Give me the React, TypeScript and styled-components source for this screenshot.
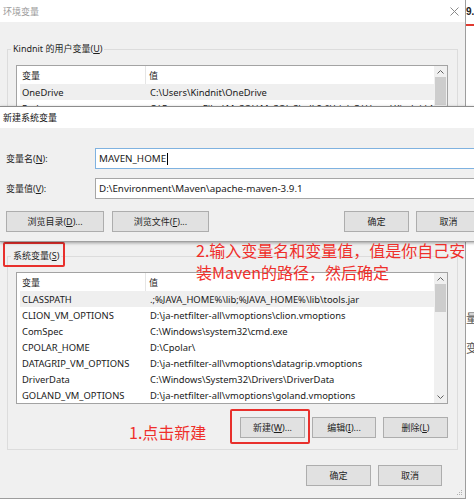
import React from "react";
import styled, { createGlobalStyle } from "styled-components";

const GlobalStyle = createGlobalStyle`
  html, body { margin: 0; padding: 0; background: #fff; }
  body {
    font-family: "Noto Sans", "Noto Sans CJK SC", sans-serif;
    font-size: 9px;
    color: #1e1e1e;
  }
  * { box-sizing: border-box; }
`;

const Desktop = styled.div`
  position: relative;
  width: 474px;
  height: 502px;
  overflow: hidden;
  background: #fff;
  display: flex;
  align-items: flex-start;
`;

const BackWindow = styled.div`
  position: relative;
  flex: 0 0 466px;
  height: 499px;
  display: flex;
  flex-direction: column;
  background: #f0f0f0;
  border-right: 1px solid #9d9d9d;
  border-bottom: 1px solid #9d9d9d;
`;

const TitleBar = styled.div<{ $active?: boolean; $h: number }>`
  height: ${(p) => p.$h}px;
  flex: 0 0 auto;
  background: #fff;
  display: flex;
  align-items: center;
  padding-left: 3px;
  color: ${(p) => (p.$active ? "#111" : "#9a9a9a")};
  font-family: "Noto Sans CJK SC", sans-serif;
  font-size: 9px;
`;

const CloseIcon = styled.svg`
  margin-left: auto;
  margin-right: 6px;
`;

const WindowBody = styled.div`
  padding: 0 7px;
  display: flex;
  flex-direction: column;
`;

const Group = styled.fieldset<{ $mt: number }>`
  margin: ${(p) => p.$mt}px 0 0 0;
  border: 1px solid #dcdcdc;
  padding: 9px 9px 11px 8px;
  min-width: 0;
`;

const Legend = styled.legend<{ $framed?: boolean }>`
  position: relative;
  padding: 0 2px;
  margin-left: -5px;
  line-height: 14px;
  font-size: 9px;
  color: #1e1e1e;
  ${(p) =>
    p.$framed
      ? `&::after {
    content: "";
    position: absolute;
    inset: -7px -4px -4px -8px;
    border: 2px solid #e8302c;
    border-radius: 2px;
  }`
      : ""}
`;

const List = styled.div<{ $h: number }>`
  height: ${(p) => p.$h}px;
  border: 1px solid #a3a3a3;
  background: #fff;
  display: flex;
  overflow: hidden;
`;

const ListTable = styled.div`
  flex: 1;
  min-width: 0;
  display: flex;
  flex-direction: column;
`;

const HeaderRow = styled.div`
  display: grid;
  grid-template-columns: 128px 1fr;
  height: 18px;
  flex: 0 0 auto;
`;

const HeaderCell = styled.div<{ $divider?: boolean }>`
  display: flex;
  align-items: center;
  padding-left: ${(p) => (p.$divider ? 3 : 5)}px;
  border-left: ${(p) => (p.$divider ? "1px solid #e5e5e5" : "none")};
`;

const Row = styled.div<{ $selected?: boolean }>`
  display: grid;
  grid-template-columns: 128px 1fr;
  height: 16px;
  flex: 0 0 auto;
  margin-left: 3px;
  align-items: center;
  white-space: nowrap;
  font-size: 9.4px;
  color: #1a1a1a;
  background: ${(p) => (p.$selected ? "#efefef" : "transparent")};
`;

const Cell = styled.div`
  padding-left: 2px;
  overflow: hidden;
`;

const Scrollbar = styled.div`
  flex: 0 0 13px;
  background: #f0f0f0;
  display: flex;
  flex-direction: column;
  align-items: center;
`;

const ScrollArrow = styled.div<{ $h: number }>`
  height: ${(p) => p.$h}px;
  width: 100%;
  display: flex;
  align-items: center;
  justify-content: center;
`;

const Thumb = styled.div`
  width: 11px;
  height: 28px;
  background: #cdcdcd;
`;

const Spacer = styled.div`
  flex: 1;
`;

const ActionRow = styled.div<{ $mt: number; $pr?: number }>`
  display: flex;
  justify-content: flex-end;
  gap: 7px;
  margin-top: ${(p) => p.$mt}px;
  padding-right: ${(p) => p.$pr ?? 0}px;
`;

const Button = styled.button<{ $w: number }>`
  width: ${(p) => p.$w}px;
  height: 21px;
  flex: 0 0 auto;
  border: 1px solid #adadad;
  background: #e1e1e1;
  font: inherit;
  color: #1e1e1e;
  padding: 0;
  display: flex;
  align-items: center;
  justify-content: center;
  white-space: nowrap;
`;

const FramedButton = styled(Button)`
  position: relative;
  &::after {
    content: "";
    position: absolute;
    inset: -9px -6px -7px -11px;
    border: 2px solid #e8302c;
    border-radius: 2px;
  }
`;

const Grip = styled.svg`
  position: absolute;
  right: 2px;
  bottom: 2px;
`;

const SideStrip = styled.div`
  flex: 1;
  height: 502px;
  display: flex;
  flex-direction: column;
  overflow: hidden;
  background: #fff;
`;

const StripNumber = styled.div`
  margin-top: 5px;
  height: 14px;
  line-height: 14px;
  font-family: "Liberation Sans", sans-serif;
  font-weight: bold;
  font-size: 10px;
  color: #222;
`;

const StripRedLine = styled.div`
  margin-top: 5px;
  height: 2px;
  background: #e03a30;
`;

const StripGlyph = styled.div<{ $mt: number }>`
  margin-top: ${(p) => p.$mt}px;
  font-family: "Noto Sans CJK SC", sans-serif;
  font-size: 12px;
  line-height: 14px;
  color: #555;
  white-space: nowrap;
`;

const FrontWindow = styled.div`
  position: absolute;
  top: 106px;
  left: 0;
  width: 490px;
  background: #f0f0f0;
  border-top: 1px solid #8c8c8c;
  border-bottom: 1px solid #a0a0a0;
  box-shadow: 0 1px 3px rgba(0, 0, 0, 0.35);
  display: flex;
  flex-direction: column;
  z-index: 1;
`;

const FrontBody = styled.div`
  padding: 20px 9px 9px 6px;
  display: flex;
  flex-direction: column;
`;

const FieldRow = styled.div<{ $mt: number }>`
  display: grid;
  grid-template-columns: 89px 1fr;
  align-items: center;
  height: 21px;
  margin-top: ${(p) => p.$mt}px;
`;

const FieldLabel = styled.label`
  white-space: nowrap;
`;

const Input = styled.div<{ $focused?: boolean }>`
  height: 21px;
  border: 1px solid ${(p) => (p.$focused ? "#7fb2e0" : "#a6a6a6")};
  background: #fff;
  padding-left: 3px;
  display: flex;
  align-items: center;
  white-space: nowrap;
  font-size: 9.8px;
  color: #1a1a1a;
`;

const Caret = styled.span`
  display: inline-block;
  width: 1px;
  height: 12px;
  background: #000;
  margin-left: 1px;
`;

const FrontButtons = styled.div`
  display: flex;
  gap: 8px;
  margin-top: 12px;
`;

const PushRight = styled.div`
  margin-left: auto;
  display: flex;
  gap: 7px;
`;

const Annotation = styled.div<{ $left: number; $top: number }>`
  position: absolute;
  left: ${(p) => p.$left}px;
  top: ${(p) => p.$top}px;
  color: #ef2f2b;
  font-family: "Noto Sans CJK SC", sans-serif;
  font-size: 16px;
  line-height: 22px;
  white-space: nowrap;
  z-index: 2;
`;

type Var = [string, string];

const userVars: Var[] = [
  ["OneDrive", "C:\\Users\\Kindnit\\OneDrive"],
  ["Path", "C:\\Program Files\\MySQL\\MySQL Shell 8.0\\bin\\;C:\\Users\\Kindnit\\AppData\\Local"],
];

const systemVars: Var[] = [
  ["CLASSPATH", ".;%JAVA_HOME%\\lib;%JAVA_HOME%\\lib\\tools.jar"],
  ["CLION_VM_OPTIONS", "D:\\ja-netfilter-all\\vmoptions\\clion.vmoptions"],
  ["ComSpec", "C:\\Windows\\system32\\cmd.exe"],
  ["CPOLAR_HOME", "D:\\Cpolar\\"],
  ["DATAGRIP_VM_OPTIONS", "D:\\ja-netfilter-all\\vmoptions\\datagrip.vmoptions"],
  ["DriverData", "C:\\Windows\\System32\\Drivers\\DriverData"],
  ["GOLAND_VM_OPTIONS", "D:\\ja-netfilter-all\\vmoptions\\goland.vmoptions"],
];

const Chevron = ({ up }: { up?: boolean }) => (
  <svg width="7" height="4" viewBox="0 0 7 4">
    <polyline
      points={up ? "0.5,3.5 3.5,0.5 6.5,3.5" : "0.5,0.5 3.5,3.5 6.5,0.5"}
      fill="none"
      stroke="#606060"
      strokeWidth="1"
    />
  </svg>
);

const VarList = ({ rows, height }: { rows: Var[]; height: number }) => (
  <List $h={height}>
    <ListTable>
      <HeaderRow>
        <HeaderCell>变量</HeaderCell>
        <HeaderCell $divider>值</HeaderCell>
      </HeaderRow>
      {rows.map(([k, v], i) => (
        <Row key={k} $selected={i === 0}>
          <Cell>{k}</Cell>
          <Cell>{v}</Cell>
        </Row>
      ))}
    </ListTable>
    <Scrollbar>
      <ScrollArrow $h={11}>
        <Chevron up />
      </ScrollArrow>
      <Thumb />
      <Spacer />
      <ScrollArrow $h={12}>
        <Chevron />
      </ScrollArrow>
    </Scrollbar>
  </List>
);

export default function App() {
  return (
    <>
      <GlobalStyle />
      <Desktop>
        <BackWindow>
          <TitleBar $h={22}>
            环境变量
            <CloseIcon width="9" height="9" viewBox="0 0 9 9">
              <path d="M0.5 0.5 L8.5 8.5 M8.5 0.5 L0.5 8.5" stroke="#8a8a8a" strokeWidth="1" />
            </CloseIcon>
          </TitleBar>
          <WindowBody>
            <Group $mt={20}>
              <Legend>
                Kindnit 的用户变量(<u>U</u>)
              </Legend>
              <VarList rows={userVars} height={130} />
            </Group>
            <Group $mt={42}>
              <Legend $framed>
                系统变量(<u>S</u>)
              </Legend>
              <VarList rows={systemVars} height={132} />
              <ActionRow $mt={13}>
                <FramedButton $w={65}>
                  新建(<u>W</u>)...
                </FramedButton>
                <Button $w={64}>
                  编辑(<u>I</u>)...
                </Button>
                <Button $w={65}>
                  删除(<u>L</u>)
                </Button>
              </ActionRow>
            </Group>
            <ActionRow $mt={15} $pr={16}>
              <Button $w={65}>确定</Button>
              <Button $w={64}>取消</Button>
            </ActionRow>
          </WindowBody>
          <Grip width="6" height="6" viewBox="0 0 6 6">
            <rect x="4" y="0" width="1" height="1" fill="#b0b0b0" />
            <rect x="2" y="2" width="1" height="1" fill="#b0b0b0" />
            <rect x="4" y="2" width="1" height="1" fill="#b0b0b0" />
            <rect x="0" y="4" width="1" height="1" fill="#b0b0b0" />
            <rect x="2" y="4" width="1" height="1" fill="#b0b0b0" />
            <rect x="4" y="4" width="1" height="1" fill="#b0b0b0" />
          </Grip>
        </BackWindow>
        <SideStrip>
          <StripNumber>9.</StripNumber>
          <StripRedLine />
          <StripGlyph $mt={285}>量</StripGlyph>
          <StripGlyph $mt={16}>变</StripGlyph>
        </SideStrip>

        <FrontWindow>
          <TitleBar $h={21} $active>
            新建系统变量
          </TitleBar>
          <FrontBody>
            <FieldRow $mt={0}>
              <FieldLabel>
                变量名(<u>N</u>):
              </FieldLabel>
              <Input $focused>
                MAVEN_HOME
                <Caret />
              </Input>
            </FieldRow>
            <FieldRow $mt={9}>
              <FieldLabel>
                变量值(<u>V</u>):
              </FieldLabel>
              <Input>D:\Environment\Maven\apache-maven-3.9.1</Input>
            </FieldRow>
            <FrontButtons>
              <Button $w={98}>
                浏览目录(<u>D</u>)...
              </Button>
              <Button $w={97}>
                浏览文件(<u>F</u>)...
              </Button>
              <PushRight>
                <Button $w={65}>确定</Button>
                <Button $w={65}>取消</Button>
              </PushRight>
            </FrontButtons>
          </FrontBody>
        </FrontWindow>

        <Annotation $left={196} $top={239}>
          2.输入变量名和变量值，值是你自己安
          <br />
          装Maven的路径，然后确定
        </Annotation>
        <Annotation $left={129} $top={421}>
          1.点击新建
        </Annotation>
      </Desktop>
    </>
  );
}
